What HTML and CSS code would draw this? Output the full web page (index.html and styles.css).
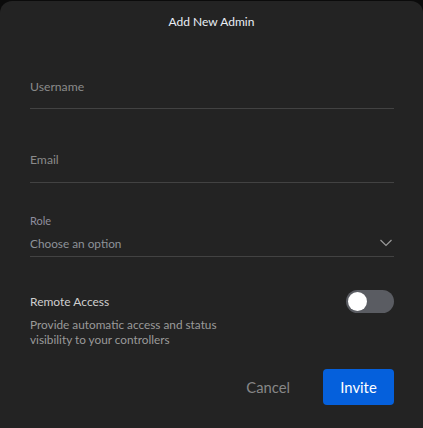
FILE: index.html
```html
<!DOCTYPE html>
<html>
    <head>
        <meta charset="utf-8" />
        <title>Add New Admin</title>
        <link rel="stylesheet" href="styles.css">
    </head>
    <body>
        <div class="dialog">
            <div class="dialog-header">Add New Admin</div>

            <form class="dialog-body">
                <div class="field">
                    <input type="text" class="text-input" placeholder="Username" />
                </div>

                <div class="field">
                    <input type="email" class="text-input" placeholder="Email" />
                </div>

                <div class="field field-select">
                    <label class="small-label">Role</label>
                    <div class="select-row">
                        <span class="select-value">Choose an option</span>
                        <svg class="chevron" width="12" height="8" viewBox="0 0 12 8">
                            <path d="M0.5 1 L6 6.5 L11.5 1" fill="none" stroke="#9a9a9a" stroke-width="1.2" />
                        </svg>
                    </div>
                </div>

                <div class="remote">
                    <div class="remote-text">
                        <div class="remote-title">Remote Access</div>
                        <div class="remote-desc">Provide automatic access and status<br>visibility to your controllers</div>
                    </div>
                    <div class="toggle"><span class="knob"></span></div>
                </div>

                <div class="actions">
                    <button type="button" class="btn-cancel">Cancel</button>
                    <button type="button" class="btn-invite">Invite</button>
                </div>
            </form>
        </div>
    </body>
</html>
```

FILE: styles.css
```css
* {
    box-sizing: border-box;
    margin: 0;
    padding: 0;
}

body {
    font-family: Lato, "Noto Sans", sans-serif;
    background-color: #0b0b0b;
    color: #fff;
    height: 428px;
    overflow: hidden;
}

.dialog {
    margin-top: 1px;
    height: 460px;
    background-color: #232323;
    border-radius: 12px 12px 0 0;
}

.dialog-header {
    height: 44px;
    line-height: 42px;
    text-align: center;
    font-size: 12px;
    color: #e9eef5;
}

.dialog-body {
    padding: 0 29px 0 30px;
    display: flex;
    flex-direction: column;
}

.field {
    border-bottom: 1px solid #424242;
    padding-top: 31px;
    padding-bottom: 12px;
}

.field + .field {
    margin-top: 9px;
    padding-bottom: 13px;
}

.text-input {
    display: block;
    width: 100%;
    height: 20px;
    border: none;
    outline: none;
    background: transparent;
    font-family: inherit;
    font-size: 12.2px;
    color: #ddd;
}

.text-input::placeholder {
    color: #8a8a8a;
}

.field-select {
    padding-top: 31px;
    padding-bottom: 3px !important;
    margin-top: 0 !important;
}

.small-label {
    display: block;
    font-size: 11px;
    line-height: 14px;
    color: #8f8e9e;
    margin-bottom: 5px;
}

.select-row {
    display: flex;
    align-items: center;
    justify-content: space-between;
    height: 20px;
}

.select-value {
    font-size: 11.8px;
    color: #8d9299;
}

.chevron {
    margin-right: 2px;
}

.remote {
    display: flex;
    justify-content: space-between;
    align-items: flex-start;
    margin-top: 36px;
}

.remote-title {
    font-size: 12px;
    line-height: 18px;
    color: #cfcfcf;
}

.remote-desc {
    margin-top: 6px;
    font-size: 11.8px;
    line-height: 15px;
    color: #9a9a9a;
}

.toggle {
    position: relative;
    width: 48px;
    height: 23px;
    margin-top: -3px;
    border-radius: 12px;
    background-color: #5a5c62;
}

.knob {
    position: absolute;
    left: 2px;
    top: 2px;
    width: 19px;
    height: 19px;
    border-radius: 50%;
    background-color: #fff;
}

.actions {
    display: flex;
    justify-content: flex-end;
    align-items: center;
    margin-top: 22px;
}

button {
    font-family: inherit;
    font-size: 14.8px;
    border: none;
    cursor: pointer;
}

.btn-cancel {
    background: none;
    color: #878787;
    margin-right: 33px;
}

.btn-invite {
    width: 71px;
    height: 36px;
    border-radius: 4px;
    background-color: #0560dc;
    color: #fff;
}
```
